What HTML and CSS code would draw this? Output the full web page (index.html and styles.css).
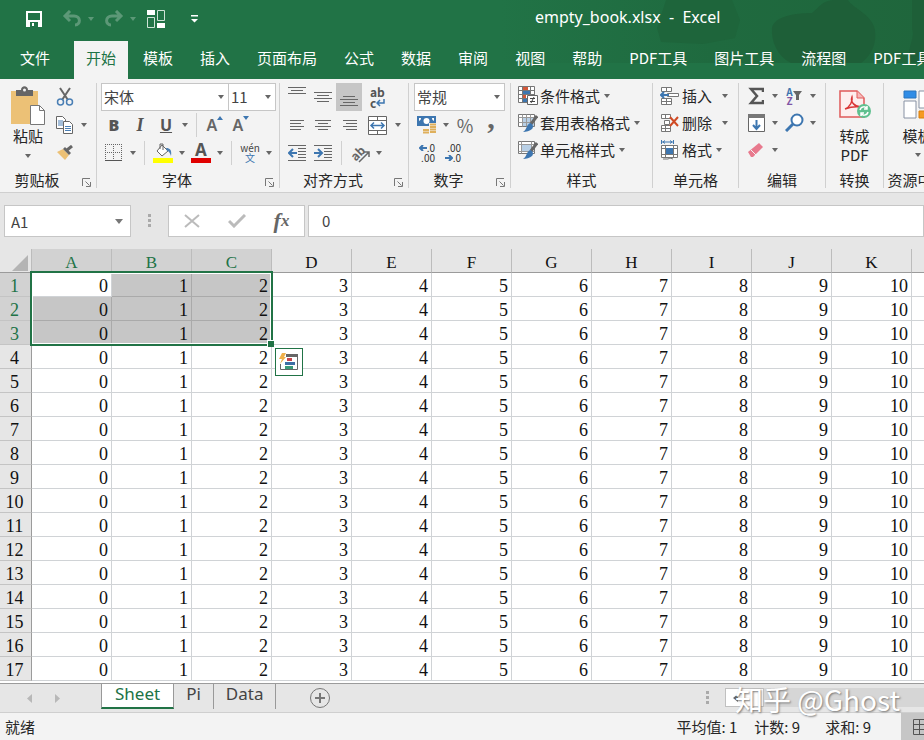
FILE: index.html
```html
<!DOCTYPE html>
<html lang="zh-CN">
<head>
  <meta charset="UTF-8">
  <meta name="viewport" content="width=device-width, initial-scale=1.0">
  <title>empty_book.xlsx - Excel</title>
  <link rel="stylesheet" href="styles.css">
</head>
<body>
  <div class="app">
    <header class="header">
      <svg class="header-art" width="424" height="79" viewBox="0 0 424 79" aria-hidden="true">
        <defs>
          <linearGradient id="shade"><stop offset="0" stop-color="#1f6a3f" stop-opacity="0"/><stop offset=".5" stop-color="#1f6a3f"/><stop offset="1" stop-color="#1f663c"/></linearGradient>
        </defs>
        <rect width="424" height="63" fill="url(#shade)"/>
        <path d="M166 0h66l8 20-5 18-32 6-42-2-4-14z" fill="#1e653b"/>
        <path d="M272 28c2-12 24-15 40-15 8-6 10-13 24-13h12c4 8 24 14 27 30 2 14-4 26-14 33h-70c-14-7-20-22-19-35z" fill="#1e5f38"/>
        <path d="M412 0h12v63h-12c-8-12 4-24 0-34z" fill="#1e5f38"/>
      </svg>
      <div class="title-bar">
        <div class="quick">
          <button class="quick-btn" aria-label="保存"><svg width="18" height="18" viewBox="0 0 18 18"><path d="M1 1h16v16H1z" fill="#fff"/><path d="M3 3h12v7H3zM5 12h8v5H5z" fill="#217346"/><path d="M7 13h2v3H7z" fill="#fff"/></svg></button>
          <button class="quick-btn dim" aria-label="撤消"><svg width="20" height="18" viewBox="0 0 20 18"><path d="M8 1L3 6l5 5M3 6h9c7 0 7 9 1 9" fill="none" stroke="#5c9877" stroke-width="3"/></svg></button>
          <button class="quick-drop" aria-label="撤消列表"><i class="caret"></i></button>
          <button class="quick-btn dim" aria-label="恢复"><svg width="20" height="18" viewBox="0 0 20 18"><path d="M12 1l5 5-5 5M17 6H8c-7 0-7 9-1 9" fill="none" stroke="#5c9877" stroke-width="3"/></svg></button>
          <button class="quick-drop" aria-label="恢复列表"><i class="caret"></i></button>
          <button class="quick-btn" aria-label="模板"><svg width="20" height="20" viewBox="0 0 20 20"><path d="M1 1h8v5H1zM11 14h8v5h-8z" fill="#fff"/><path d="M1.500 8.500h7v10h-7zM11.500 1.500h7v10h-7z" fill="none" stroke="#cfe3d7"/></svg></button>
          <button class="quick-more" aria-label="自定义快速访问工具栏"><svg width="7" height="8" viewBox="0 0 7 8"><path d="M0 0h7v1.500H0zM0 4h7L3.500 7.500z" fill="#fff"/></svg></button>
        </div>
        <div class="title">empty_book.xlsx&nbsp; -&nbsp; Excel</div>
      </div>
      <nav class="tabs">
        <button class="tab file">文件</button>
        <button class="tab active">开始</button>
        <button class="tab">模板</button>
        <button class="tab">插入</button>
        <button class="tab">页面布局</button>
        <button class="tab">公式</button>
        <button class="tab">数据</button>
        <button class="tab">审阅</button>
        <button class="tab">视图</button>
        <button class="tab">帮助</button>
        <button class="tab">PDF工具</button>
        <button class="tab">图片工具</button>
        <button class="tab">流程图</button>
        <button class="tab">PDF工具</button>
      </nav>
    </header>

    <div class="ribbon">
      <section class="group clipboard">
        <div class="clip-body">
          <button class="big paste">
            <svg width="36" height="40" viewBox="0 0 36 40"><path d="M1 5h27v33H1z" fill="#ecc176"/><path d="M6 10V4h5c0-5 7-5 7 0h5v6z" fill="#666"/><circle cx="14.500" cy="4" r="1.500" fill="#f3f3f3"/><path d="M20.500 19.500h9l5 5v14h-14z" fill="#fff" stroke="#777"/><path d="M29.500 19.500v5h5" fill="none" stroke="#777"/></svg>
            <span>粘贴</span>
            <i class="caret"></i>
          </button>
          <div class="clip-tools">
            <div class="row"><button class="ico" aria-label="剪切"><svg width="18" height="20" viewBox="0 0 18 20"><path d="M4 1l8 12M14 1L6 13" stroke="#666" stroke-width="2" fill="none"/><circle cx="4.500" cy="15" r="3" fill="none" stroke="#4a7fb5" stroke-width="1.500"/><circle cx="13.500" cy="15" r="3" fill="none" stroke="#4a7fb5" stroke-width="1.500"/></svg></button></div>
            <div class="row"><button class="ico" aria-label="复制"><svg width="18" height="18" viewBox="0 0 18 18"><path d="M.5.5h6l3 3v9h-9z" fill="#fff" stroke="#666"/><path d="M2 5h5M2 7h5M2 9h5" stroke="#4a7fb5"/><path d="M7.500 5.500h6l3 3v9h-9z" fill="#fff" stroke="#666"/><path d="M9 10.500h6M9 12.500h6M9 14.500h6" stroke="#4a7fb5"/></svg></button><button class="drop" aria-label="复制选项"><i class="caret"></i></button></div>
            <div class="row"><button class="ico" aria-label="格式刷"><svg width="18" height="16" viewBox="0 0 18 16"><path d="M1 7l6-3 6 6-4 5z" fill="#ecc176"/><path d="M7 4l2-2 6 6-2 2z" fill="#666"/><path d="M11 5l5-4" stroke="#666" stroke-width="3"/></svg></button></div>
          </div>
        </div>
        <div class="label">剪贴板<button class="launch" aria-label="剪贴板设置"><svg width="9" height="9" viewBox="0 0 9 9"><path d="M.5 8V.5H8M3.500 3.500l4 4M8.500 4v4.500H4" fill="none" stroke="#777"/></svg></button></div>
      </section>

      <section class="group font">
        <div class="row">
          <div class="combo name"><select aria-label="字体"><option>宋体</option></select><i class="caret"></i></div>
          <div class="combo size"><select aria-label="字号"><option>11</option></select><i class="caret"></i></div>
        </div>
        <div class="row">
          <button class="ico letter"><b>B</b></button>
          <button class="ico letter italic"><i>I</i></button>
          <button class="ico letter"><u>U</u></button>
          <button class="drop" aria-label="下划线选项"><i class="caret"></i></button>
          <span class="sep"></span>
          <button class="ico grow">A<svg width="6" height="4" viewBox="0 0 6 4"><path d="M0 4l3-4 3 4z" fill="#3d76b0"/></svg></button>
          <button class="ico grow">A<svg width="6" height="4" viewBox="0 0 6 4"><path d="M0 0h6L3 4z" fill="#3d76b0"/></svg></button>
        </div>
        <div class="row">
          <button class="ico" aria-label="边框"><svg width="18" height="18" viewBox="0 0 18 18"><path d="M0 .5h17M.5 0v16M16.500 0v16M8.500 0v16M0 8.500h17" stroke="#666" stroke-dasharray="1 1" fill="none"/><path d="M0 16.500h17" stroke="#555"/></svg></button>
          <button class="drop" aria-label="边框选项"><i class="caret"></i></button>
          <span class="sep"></span>
          <button class="ico" aria-label="填充颜色"><svg width="20" height="20" viewBox="0 0 20 20"><path d="M0 15h20v5H0z" fill="#ff0"/><path d="M9 2l6 6-6 5-5-5z" fill="#fff" stroke="#666"/><path d="M7 6V1h3v6" fill="none" stroke="#666"/><path d="M13 5c4 0 6 2 5 8-1-3-2-5-4-5z" fill="#4a7fb5"/></svg></button>
          <button class="drop" aria-label="填充颜色选项"><i class="caret"></i></button>
          <button class="ico color">A<span class="red"></span></button>
          <button class="drop" aria-label="字体颜色选项"><i class="caret"></i></button>
          <span class="sep"></span>
          <button class="ico pinyin"><span>wén</span><span class="blue">文</span></button>
          <button class="drop" aria-label="拼音选项"><i class="caret"></i></button>
        </div>
        <div class="label">字体<button class="launch" aria-label="字体设置"><svg width="9" height="9" viewBox="0 0 9 9"><path d="M.5 8V.5H8M3.500 3.500l4 4M8.500 4v4.500H4" fill="none" stroke="#777"/></svg></button></div>
      </section>

      <section class="group align">
        <div class="row">
          <button class="ico top" aria-label="顶端对齐"><svg width="18" height="8" viewBox="0 0 18 8"><path d="M0 .5h18M3 3.500h12M0 6.500h18" stroke="#666"/></svg></button>
          <button class="ico" aria-label="垂直居中"><svg width="18" height="11" viewBox="0 0 18 11"><path d="M0 .5h18M3 3.500h12M0 6.500h18M3 9.500h12" stroke="#666"/></svg></button>
          <button class="ico bottom on" aria-label="底端对齐"><svg width="18" height="11" viewBox="0 0 18 11"><path d="M3 .5h12M0 3.500h18M3 6.500h12M0 9.500h18" stroke="#666"/></svg></button>
          <button class="ico wide wrap"><span>ab</span><span>c<svg width="9" height="8" viewBox="0 0 9 8"><path d="M8 0v4H2M4 1L1 4l3 3" fill="none" stroke="#3d76b0" stroke-width="1.500"/></svg></span></button>
        </div>
        <div class="row">
          <button class="ico" aria-label="左对齐"><svg width="15" height="11" viewBox="0 0 15 11"><path d="M0 .5h14M0 3.500h11M0 6.500h14M0 9.500h11" stroke="#666"/></svg></button>
          <button class="ico" aria-label="居中"><svg width="16" height="11" viewBox="0 0 16 11"><path d="M0 .5h16M3 3.500h10M0 6.500h16M3 9.500h10" stroke="#666"/></svg></button>
          <button class="ico" aria-label="右对齐"><svg width="15" height="11" viewBox="0 0 15 11"><path d="M1 .5h14M4 3.500h11M1 6.500h14M4 9.500h11" stroke="#666"/></svg></button>
          <button class="ico wide" aria-label="合并后居中"><svg width="19" height="19" viewBox="0 0 19 19"><path d="M.5.5h18v18H.5zM.5 4.500h18M.5 14.500h18M9.500.5v4M9.500 14.500v4" fill="#fff" stroke="#666"/><path d="M3 9.500h13M6 6.500l-3 3 3 3M13 6.500l3 3-3 3" fill="none" stroke="#3d76b0" stroke-width="1.500"/></svg></button>
          <button class="drop" aria-label="合并选项"><i class="caret"></i></button>
        </div>
        <div class="row">
          <button class="ico" aria-label="减少缩进量"><svg width="18" height="17" viewBox="0 0 18 17"><path d="M0 .5h18M10 3.500h8M10 6.500h8M10 9.500h8M10 12.500h8M0 15.500h18" stroke="#666"/><path d="M9 8H2M5 4L1 8l4 4" stroke="#3d76b0" stroke-width="2" fill="none"/></svg></button>
          <button class="ico" aria-label="增加缩进量"><svg width="18" height="17" viewBox="0 0 18 17"><path d="M0 .5h18M10 3.500h8M10 6.500h8M10 9.500h8M10 12.500h8M0 15.500h18" stroke="#666"/><path d="M0 8h7M4 4l4 4-4 4" stroke="#3d76b0" stroke-width="2" fill="none"/></svg></button>
          <span class="sep"></span>
          <button class="ico orient"><span>ab</span><svg width="12" height="12" viewBox="0 0 12 12"><path d="M1 11L11 1M6 1h5v5" fill="none" stroke="#666" stroke-width="1.500"/></svg></button>
          <button class="drop" aria-label="方向选项"><i class="caret"></i></button>
        </div>
        <div class="label">对齐方式<button class="launch" aria-label="对齐设置"><svg width="9" height="9" viewBox="0 0 9 9"><path d="M.5 8V.5H8M3.500 3.500l4 4M8.500 4v4.500H4" fill="none" stroke="#777"/></svg></button></div>
      </section>

      <section class="group number">
        <div class="row">
          <div class="combo format"><select aria-label="数字格式"><option>常规</option></select><i class="caret"></i></div>
        </div>
        <div class="row">
          <button class="ico" aria-label="会计数字格式"><svg width="20" height="20" viewBox="0 0 20 20"><path d="M0 1h19v10H0z" fill="#3d76b0"/><path d="M2 3h2c0 2-1 2-2 3zM17 3h-2c0 2 1 2 2 3z" fill="#fff"/><circle cx="9.500" cy="6" r="3" fill="#fff"/><path d="M12 8h7v11H5v-5h7z" fill="#f3f3f3"/><path d="M13 9.500h6M13 12h6M13 14.500h6M13 17h6M6 15h6M6 17.500h6" stroke="#dfb05c" stroke-width="2"/></svg></button>
          <button class="drop" aria-label="会计格式选项"><i class="caret"></i></button>
          <button class="ico percent">%</button>
          <button class="ico comma">,</button>
        </div>
        <div class="row">
          <button class="ico dec"><span><svg width="8" height="6" viewBox="0 0 8 6"><path d="M8 3H2M4 0L1 3l3 3" fill="none" stroke="#3d76b0" stroke-width="2"/></svg>.0</span><span>.00</span></button>
          <button class="ico dec"><span>.00</span><span><svg width="8" height="6" viewBox="0 0 8 6"><path d="M0 3h6M4 0l3 3-3 3" fill="none" stroke="#3d76b0" stroke-width="2"/></svg>.0</span></button>
        </div>
        <div class="label">数字<button class="launch" aria-label="数字设置"><svg width="9" height="9" viewBox="0 0 9 9"><path d="M.5 8V.5H8M3.500 3.500l4 4M8.500 4v4.500H4" fill="none" stroke="#777"/></svg></button></div>
      </section>

      <section class="group styles">
        <button class="line"><svg width="20" height="20" viewBox="0 0 20 20"><path d="M.5.5h16v16H.5zM.5 4.500h16M.5 8.500h16M.5 12.500h16M4.500.5v16M12.500.5v16" fill="#fff" stroke="#777"/><path d="M5 1h5v3H5zM5 9h3v3H5z" fill="#d2583a"/><path d="M5 5h7v3H5zM5 13h4v3H5z" fill="#3d76b0"/><path d="M9.500 9.500h10v9h-10z" fill="#fff" stroke="#666"/><path d="M12 12.500h5M12 15.500h5M16 11l-3 6" stroke="#444"/></svg><span>条件格式</span><i class="caret"></i></button>
        <button class="line"><svg width="20" height="20" viewBox="0 0 20 20"><path d="M.5 1.500h16v12H.5z" fill="#fff" stroke="#777"/><path d="M5 5h11v8H5z" fill="#b9d0e6"/><path d="M.5 4.500h16M.5 9.500h16M4.500 1.500v12M8.500 1.500v12M12.500 1.500v12" stroke="#999" fill="none"/><path d="M19 3l-6 8" stroke="#666" stroke-width="3"/><path d="M12 10c3 1 4 4 2 6s-6 3-9 3c4-2 3-7 7-9z" fill="#3d76b0"/></svg><span>套用表格格式</span><i class="caret"></i></button>
        <button class="line"><svg width="20" height="20" viewBox="0 0 20 20"><path d="M.5 1.500h16v12H.5z" fill="#fff" stroke="#777"/><path d="M4 5h9v6H4z" fill="#b9d0e6"/><path d="M.5 4.500h16M.5 11.500h16M3.500 1.500v12M13.500 1.500v12" stroke="#999" fill="none"/><path d="M19 3l-6 8" stroke="#666" stroke-width="3"/><path d="M12 10c3 1 4 4 2 6s-6 3-9 3c4-2 3-7 7-9z" fill="#3d76b0"/></svg><span>单元格样式</span><i class="caret"></i></button>
        <div class="label">样式</div>
      </section>

      <section class="group cells">
        <button class="line"><svg width="20" height="20" viewBox="0 0 20 20"><path d="M1.500 1.500h10v4h-10zM6.500 1.500v4M1.500 12.500h10v6h-10zM1.500 15.500h10M6.500 12.500v6M7.500 7.500h11v3h-11z" fill="#fff" stroke="#777"/><path d="M9 9H2M4 6L1 9l3 3" stroke="#3d76b0" stroke-width="2" fill="none"/></svg><span>插入</span><i class="caret far"></i></button>
        <button class="line"><svg width="20" height="20" viewBox="0 0 20 20"><path d="M1.500 1.500h9v4h-9zM5.500 1.500v4M4.500 7.500h5v4h-5zM1.500 12.500h9v6h-9zM1.500 15.500h9M5.500 12.500v6" fill="#fff" stroke="#777"/><path d="M10 4l8 9M18 4l-8 9" stroke="#cf4a24" stroke-width="2"/></svg><span>删除</span><i class="caret far"></i></button>
        <button class="line"><svg width="20" height="20" viewBox="0 0 20 20"><path d="M1.500 0v4M13.500 0v4M2 2h11M5 .5L3 2l2 1.500M10 .5L12 2l-2 1.500" stroke="#3d76b0" fill="none"/><path d="M1.500 5.500h16v12h-16zM5.500 5.500v12M13.500 5.500v12M1.500 8.500h16M1.500 14.500h16" fill="#fff" stroke="#777"/><path d="M6 8h7v6H6z" fill="#3d76b0"/><path d="M3 19h5l2-1 3 1" stroke="#777" fill="none"/></svg><span>格式</span><i class="caret"></i></button>
        <div class="label">单元格</div>
      </section>

      <section class="group edit">
        <div class="row edit-row">
          <button class="ico" aria-label="自动求和"><svg width="16" height="18" viewBox="0 0 16 18"><path d="M15 5V2H3l6 7-6 7h12v-3" fill="none" stroke="#555" stroke-width="2.500"/></svg></button><button class="drop" aria-label="求和选项"><i class="caret"></i></button>
          <button class="ico sort"><span><b class="blue">A</b><b class="purple">Z</b></span><svg width="9" height="9" viewBox="0 0 9 9"><path d="M0 0h9L6 4v5H3V4z" fill="#666"/></svg></button><button class="drop" aria-label="排序选项"><i class="caret"></i></button>
        </div>
        <div class="row edit-row">
          <button class="ico" aria-label="填充"><svg width="17" height="18" viewBox="0 0 17 18"><path d="M.5.5h16v17H.5z" fill="#fff" stroke="#666"/><path d="M0 0h17v4H0z" fill="#777"/><path d="M8.500 6v9M5 11l3.500 4 3.500-4" fill="none" stroke="#3d76b0" stroke-width="2"/></svg></button><button class="drop" aria-label="填充选项"><i class="caret"></i></button>
          <button class="ico" aria-label="查找和选择"><svg width="19" height="19" viewBox="0 0 19 19"><circle cx="12" cy="7" r="5.500" fill="#fff" stroke="#3d76b0" stroke-width="2"/><path d="M8 11l-7 7" stroke="#3d76b0" stroke-width="3"/></svg></button><button class="drop" aria-label="查找选项"><i class="caret"></i></button>
        </div>
        <div class="row edit-row">
          <button class="ico" aria-label="清除"><svg width="18" height="16" viewBox="0 0 18 16"><path d="M1 10L12 1l4 4L6 15H4z" fill="#e8798d"/><path d="M4 8l5 5" stroke="#f3f3f3"/></svg></button><button class="drop" aria-label="清除选项"><i class="caret"></i></button>
        </div>
        <div class="label">编辑</div>
      </section>

      <section class="group convert">
        <button class="big">
          <svg width="32" height="32" viewBox="0 0 32 32"><path d="M1 3h17l7 7v19H1z" fill="#fdeeee" stroke="#e05a5a" stroke-width="1.500"/><path d="M18 3v7h7" fill="#f6b9b9" stroke="#e05a5a"/><path d="M6 21c5-2 8-8 7-12-2 5 3 10 9 10-6-1-11 0-16 2z" fill="none" stroke="#d93636" stroke-width="1.500"/><circle cx="25" cy="23" r="7" fill="#5fc08f"/><path d="M21 22c1-4 6-4 7-1M29 24c-1 4-6 4-7 1M28 18v3h-3M22 28v-3h3" fill="none" stroke="#fff" stroke-width="1.500"/></svg>
          <span>转成</span><span>PDF</span>
        </button>
        <div class="label">转换</div>
      </section>

      <section class="group resource">
        <button class="big">
          <svg width="30" height="32" viewBox="0 0 30 32"><path d="M1 3h12v7H1z" fill="#2f8ce6" stroke="#2a74bd"/><path d="M1 13h12v17H1z" fill="#fff" stroke="#8791a3"/><path d="M16 3h12v17H16z" fill="#fff" stroke="#8791a3"/><path d="M16 23h12v7H16z" fill="#f59a23" stroke="#d97e0c"/></svg>
          <span>模板</span>
          <i class="caret"></i>
        </button>
        <div class="label">资源中心</div>
      </section>
    </div>

    <div class="formula-bar">
      <div class="name-box"><input type="text" aria-label="名称框" value="A1"><i class="caret"></i></div>
      <span class="dots"></span>
      <div class="fx-box">
        <button aria-label="取消"><svg width="16" height="14" viewBox="0 0 16 14"><path d="M1 1l14 12M15 1L1 13" stroke="#bbb" stroke-width="2"/></svg></button>
        <button aria-label="输入"><svg width="18" height="14" viewBox="0 0 18 14"><path d="M1 7l5 5L17 1" fill="none" stroke="#bbb" stroke-width="3"/></svg></button>
        <button class="fx">f<small>x</small></button>
      </div>
      <input class="formula" type="text" aria-label="编辑栏" value="0">
    </div>

    <main class="grid">
      <table class="sheet">
        <thead><tr id="head"><th class="corner"><svg width="16" height="16" viewBox="0 0 16 16"><path d="M16 0v16H0z" fill="#b4b4b4"/></svg></th></tr></thead>
        <tbody id="rows"></tbody>
      </table>
      <div class="selection"></div>
      <button class="quick-analysis" aria-label="快速分析"><svg width="20" height="20" viewBox="0 0 20 20"><path d="M7 3.500h11.500v14h-17V12" fill="none" stroke="#666"/><path d="M7 2h12v3H7z" fill="#666"/><path d="M8 6h5v3H8z" fill="#c8434a"/><path d="M6 10h10v3H6z" fill="#3d6fa5"/><path d="M6 14h8v3H6z" fill="#3b9a78"/><path d="M3 1h4L5 5h2l-6 7 2-5H0z" fill="#f0b04a"/></svg></button>
    </main>

    <footer>
      <div class="sheet-bar">
        <div class="sheet-nav">
          <button aria-label="上一个"><svg width="5" height="9" viewBox="0 0 5 9"><path d="M5 0v9L0 4.500z" fill="#b8b8b8"/></svg></button>
          <button aria-label="下一个"><svg width="5" height="9" viewBox="0 0 5 9"><path d="M0 0v9l5-4.500z" fill="#b8b8b8"/></svg></button>
        </div>
        <button class="sheet-tab current">Sheet</button>
        <button class="sheet-tab">Pi</button>
        <button class="sheet-tab">Data</button>
        <button class="add" aria-label="新工作表"><svg width="22" height="22" viewBox="0 0 22 22"><circle cx="11" cy="11" r="9.500" fill="none" stroke="#777"/><path d="M11 6v10M6 11h10" stroke="#777" stroke-width="2"/></svg></button>
        <span class="dots"></span>
        <div class="scroll"><button aria-label="向左滚动"><svg width="8" height="8" viewBox="0 0 8 8"><path d="M6 0v8L1 4z" fill="#666"/></svg></button></div>
        <div class="watermark">知乎 @Ghost</div>
      </div>
      <div class="status">
        <span>就绪</span>
        <span class="stat first">平均值: 1</span>
        <span class="stat">计数: 9</span>
        <span class="stat last">求和: 9</span>
        <button class="view" aria-label="普通视图"><svg width="18" height="16" viewBox="0 0 18 16"><path d="M.5.500h17v15H.5zM.5 5.500h17M.5 10.500h17M6.500.5v15M12.500.5v15" fill="none" stroke="#555"/></svg></button>
      </div>
    </footer>
  </div>
  <script src="script.js"></script>
</body>
</html>
```
FILE: styles.css
```css
* {
  box-sizing: border-box;
}

body {
  margin: 0;
  font-family: "Noto Sans CJK SC", sans-serif;
  font-size: 15px;
  color: #262626;
  background-color: #e6e6e6;
}

button,
input,
select {
  font: inherit;
  color: inherit;
  margin: 0;
  padding: 0;
  border: none;
  border-radius: 0;
  background: none;
}

svg {
  display: block;
  flex: none;
}

.app {
  display: flex;
  flex-direction: column;
  height: 100vh;
  overflow: hidden;
}

/* Title bar and tabs */
.header {
  position: relative;
  flex: none;
  background-color: #217346;
  color: #fff;
}

.header-art {
  position: absolute;
  right: 0;
  top: 0;
}

.title-bar {
  position: relative;
  display: flex;
  height: 41px;
}

.quick {
  flex: 1;
  height: 38px;
  padding-left: 21px;
  display: flex;
  align-items: center;
}

.quick-btn {
  width: 26px;
  display: flex;
  justify-content: center;
  margin-right: 12px;
}

.quick-btn.dim {
  margin-right: 0;
}

.quick-drop {
  width: 12px;
  margin-right: 4px;
  display: flex;
  justify-content: center;
  color: #5c9877;
}

.quick-more {
  margin-left: 10px;
}

.title {
  flex: 1;
  padding-left: 125px;
  font-family: "Noto Sans", sans-serif;
  font-size: 16px;
  line-height: 35px;
  white-space: nowrap;
}

.tabs {
  position: relative;
  display: flex;
  gap: 3px;
  height: 38px;
  padding-left: 8px;
  overflow: hidden;
}

.tab {
  flex: none;
  padding: 0 12px 5px;
  white-space: nowrap;
}

.tab.file {
  margin-right: 9px;
}

.tab.active {
  background-color: #f3f3f3;
  color: #217346;
}

.caret {
  flex: none;
  width: 0;
  height: 0;
  border: 3px solid transparent;
  border-top: 4px solid currentColor;
  border-bottom: 0;
}

/* Ribbon */
.ribbon {
  flex: none;
  display: flex;
  height: 114px;
  padding-top: 4px;
  overflow: hidden;
  background-color: #f3f3f3;
  border-bottom: 1px solid #cfcfcf;
}

.ribbon .caret {
  color: #666;
}

.group {
  position: relative;
  flex: none;
  display: flex;
  flex-direction: column;
  align-items: flex-start;
  height: 105px;
  border-right: 1px solid #d0d0d0;
  padding: 0 4px;
}

.clipboard {
  width: 97px;
}

.font {
  width: 183px;
}

.align {
  width: 129px;
}

.number {
  width: 102px;
}

.styles {
  width: 142px;
}

.cells {
  width: 86px;
}

.edit {
  width: 87px;
}

.convert {
  width: 58px;
}

.resource {
  width: 68px;
}

.label {
  position: absolute;
  left: 0;
  right: 0;
  bottom: -3px;
  line-height: 22px;
  text-align: center;
}

.clipboard .label,
.font .label,
.align .label,
.number .label {
  padding-right: 22px;
}

.launch {
  position: absolute;
  right: 5px;
  bottom: 4px;
}

.row {
  display: flex;
  align-items: center;
  height: 28px;
}

.ico {
  flex: none;
  width: 26px;
  height: 28px;
  display: flex;
  align-items: center;
  justify-content: center;
}

.ico.wide {
  width: 30px;
}

.ico.on {
  background-color: #c6c6c6;
}

.ico.top {
  align-items: flex-start;
  padding-top: 4px;
}

.ico.bottom {
  align-items: flex-end;
  padding-bottom: 4px;
}

.drop {
  flex: none;
  width: 12px;
  height: 28px;
  display: flex;
  align-items: center;
  justify-content: center;
}

.sep {
  width: 1px;
  height: 24px;
  margin: 0 5px;
  background-color: #d0d0d0;
}

.clip-body {
  display: flex;
}

.big {
  display: flex;
  flex-direction: column;
  align-items: center;
  width: 100%;
  line-height: 20px;
}

.paste {
  width: 46px;
  padding: 3px 0 0 2px;
}

.paste .caret {
  margin-top: 8px;
}

.clip-tools {
  padding-left: 2px;
}

.combo {
  display: flex;
  align-items: center;
  height: 28px;
  background-color: #fff;
  border: 1px solid #c6c6c6;
  color: #444;
}

.combo select {
  flex: 1;
  min-width: 0;
  height: 26px;
  padding: 0 0 2px 2px;
  appearance: none;
}

.combo .caret {
  margin-right: 4px;
}

.combo.name {
  width: 128px;
}

.combo.size {
  width: 47px;
  border-left: none;
}

.combo.format {
  width: 91px;
}

.letter {
  font-family: "Noto Sans", sans-serif;
  font-size: 16px;
  font-weight: bold;
  color: #555;
}

.letter.italic {
  font-family: "Liberation Serif", serif;
  font-size: 18px;
}

.grow {
  font-family: "Noto Sans", sans-serif;
  font-size: 16px;
  font-weight: 600;
  color: #666;
}

.grow svg {
  align-self: flex-start;
  margin-top: 5px;
}

.color {
  flex-direction: column;
  font-family: "Noto Sans", sans-serif;
  font-size: 17px;
  line-height: 14px;
  font-weight: bold;
  color: #555;
}

.red {
  width: 20px;
  height: 5px;
  margin-top: 1px;
  background-color: #e00000;
}

.blue {
  color: #3d76b0;
}

.purple {
  color: #8055a5;
}

.pinyin {
  flex-direction: column;
  font-size: 10px;
  line-height: 10px;
  color: #444;
}

.wrap {
  flex-direction: column;
  align-items: flex-start;
  padding-left: 8px;
  font-size: 12px;
  line-height: 11px;
  font-weight: 600;
  color: #555;
}

.wrap span,
.dec span {
  display: flex;
  align-items: center;
}

.orient span {
  font-size: 12px;
  line-height: 12px;
  font-weight: 600;
  color: #666;
  transform: rotate(-45deg);
}

.orient svg {
  margin: 8px 0 0 -6px;
}

.number {
  padding-left: 5px;
}

.percent {
  font-size: 18px;
  color: #666;
}

.comma {
  font-family: "Liberation Serif", serif;
  font-size: 30px;
  font-weight: bold;
  line-height: 8px;
  padding-bottom: 14px;
  color: #666;
}

.dec {
  flex-direction: column;
  align-items: flex-end;
  padding-right: 5px;
  font-size: 10px;
  line-height: 10px;
  color: #333;
}

.line {
  display: flex;
  align-items: center;
  gap: 2px;
  height: 27px;
  padding-bottom: 2px;
  line-height: 20px;
  white-space: nowrap;
}

.line .caret {
  margin-left: 2px;
}

.line .caret.far {
  margin-left: 8px;
}

.styles,
.cells {
  padding-left: 7px;
}

.edit-row {
  height: 27px;
  padding-bottom: 2px;
}

.sort span {
  display: flex;
  flex-direction: column;
  font-size: 10px;
  line-height: 9px;
}

.convert .big,
.resource .big {
  padding-top: 5px;
}

.convert .big svg,
.resource .big svg {
  margin-bottom: 6px;
}

.convert .big {
  line-height: 19px;
}

.resource .caret {
  margin-top: 7px;
}

/* Formula bar */
.formula-bar {
  flex: none;
  display: flex;
  height: 56px;
  padding: 12px 0 12px 4px;
}

.name-box,
.fx-box,
.formula {
  height: 32px;
  background-color: #fff;
  border: 1px solid #c6c6c6;
}

.name-box {
  width: 127px;
  display: flex;
  align-items: center;
  color: #444;
}

.name-box input {
  flex: 1;
  min-width: 0;
  padding-left: 6px;
}

.name-box .caret {
  margin-right: 7px;
  border-width: 5px 4px 0;
  color: #777;
}

.dots {
  width: 3px;
  height: 14px;
  background: repeating-linear-gradient(#aaa 0 3px, transparent 3px 5px);
}

.formula-bar .dots {
  margin: 9px 17px;
}

.fx-box {
  display: flex;
  width: 137px;
  margin-right: 3px;
}

.fx-box button {
  flex: 1;
  display: flex;
  align-items: center;
  justify-content: center;
}

.fx-box .fx {
  font: italic bold 22px "Liberation Serif", serif;
  color: #666;
}

.fx small {
  font-size: 17px;
}

.formula {
  flex: 1;
  min-width: 0;
  padding: 0 0 2px 13px;
  color: #444;
}

/* Cells */
.grid {
  position: relative;
  flex: 1;
  min-height: 0;
  overflow: hidden;
  background-color: #fff;
}

.sheet {
  border-collapse: separate;
  border-spacing: 0;
  table-layout: fixed;
  width: 100%;
  font-family: "Liberation Serif", "Noto Sans CJK SC", serif;
  font-size: 18px;
  color: #111;
}

.sheet th,
.sheet td {
  width: 80px;
  height: 24px;
  padding: 4px 3px 0 0;
  line-height: 19px;
  font-weight: normal;
  border-right: 1px solid #d0d3d6;
  border-bottom: 1px solid #d0d3d6;
}

.sheet td {
  text-align: right;
}

.sheet th {
  padding-right: 0;
  background-color: #e6e6e6;
  border-right-color: #bcbcbc;
  border-bottom-color: #9b9b9b;
}

.sheet thead th {
  font-size: 17px;
}

.sheet tbody th {
  border-right-color: #9b9b9b;
  border-bottom-color: #c4c4c4;
  padding-right: 2px;
}

.sheet .corner {
  width: 32px;
}

.sheet th.rest {
  width: auto;
}

.sheet tr > :last-child {
  border-right: none;
}

.corner svg {
  margin-left: 12px;
}

.sheet th.picked {
  background-color: #d2d2d2;
  color: #217346;
}

.sheet td.picked {
  background-color: #c6c6c6;
  border-color: #aaa;
}

.selection {
  position: absolute;
  left: 30px;
  top: 22px;
  width: 243px;
  height: 75px;
  border: 2px solid #217346;
  box-shadow: inset 0 0 0 1px #fff;
}

.selection::after {
  content: "";
  position: absolute;
  right: -3px;
  bottom: -3px;
  width: 6px;
  height: 6px;
  background-color: #217346;
  border-left: 1px solid #fff;
  border-top: 1px solid #fff;
}

.quick-analysis {
  position: absolute;
  left: 275px;
  top: 99px;
  width: 28px;
  height: 28px;
  display: flex;
  align-items: center;
  justify-content: center;
  background-color: #fff;
  border: 1px solid #217346;
}

/* Sheet tabs */
.sheet-bar {
  position: relative;
  display: flex;
  align-items: flex-start;
  height: 29px;
  border-top: 1px solid #9b9b9b;
  background-color: #e6e6e6;
}

.sheet-nav {
  display: flex;
  width: 101px;
  height: 28px;
  padding-left: 15px;
}

.sheet-nav button {
  width: 28px;
  display: flex;
  align-items: center;
  justify-content: center;
}

.sheet-tab {
  height: 25px;
  padding: 0 12px 5px;
  font-family: "Noto Sans", sans-serif;
  font-size: 17px;
  line-height: 20px;
  color: #444;
  border-right: 1px solid #999;
}

.sheet-tab.current {
  padding: 0 13px 3px;
  background-color: #fff;
  color: #217346;
  border-left: 1px solid #999;
  border-bottom: 2px solid #217346;
}

.add {
  margin: 3px auto 0 33px;
}

.sheet-bar .dots {
  margin: 7px 16px 0 0;
}

.scroll {
  width: 199px;
  height: 19px;
  margin-top: 4px;
  background-color: #d6d6d6;
}

.scroll button {
  width: 39px;
  height: 19px;
  padding-left: 6px;
  background-color: #fff;
  border: 1px solid #c0c0c0;
}

.watermark {
  position: absolute;
  right: 24px;
  top: -2px;
  font-size: 28px;
  line-height: 34px;
  color: #fff;
  text-shadow: 1px 1px 2px #777;
  white-space: nowrap;
}

/* Status bar */
.status {
  display: flex;
  align-items: center;
  height: 28px;
  padding-left: 5px;
  line-height: 26px;
  background-color: #f3f3f3;
  border-top: 1px solid #cfcfcf;
}

.stat {
  margin-right: 17px;
  white-space: nowrap;
}

.stat.first {
  margin-left: auto;
}

.stat.last {
  margin-left: 8px;
  margin-right: 30px;
}

.view {
  width: 23px;
  height: 27px;
  padding-left: 12px;
  overflow: hidden;
  background-color: #c6c6c6;
}
```
FILE: script.js
```javascript
const columns = 'ABCDEFGHIJK'.split('');
const head = document.getElementById('head');
const rows = document.getElementById('rows');

function addHeader(tr, text, className) {
  const th = document.createElement('th');
  th.textContent = text;
  th.className = className;
  tr.appendChild(th);
}

// Column letters, then an unnamed column that fills the rest of the window
columns.forEach((letter, col) => addHeader(head, letter, col < 3 ? 'picked' : ''));
addHeader(head, '', 'rest');

// Every row holds 0, 1, 2, ... and A1:C3 is selected
for (let row = 1; row <= 17; row++) {
  const tr = rows.insertRow();
  addHeader(tr, row, row <= 3 ? 'picked' : '');
  columns.forEach((letter, col) => {
    const td = tr.insertCell();
    td.textContent = col;
    if (row <= 3 && col < 3 && !(row === 1 && col === 0)) td.className = 'picked';
  });
  tr.insertCell();
}
```
